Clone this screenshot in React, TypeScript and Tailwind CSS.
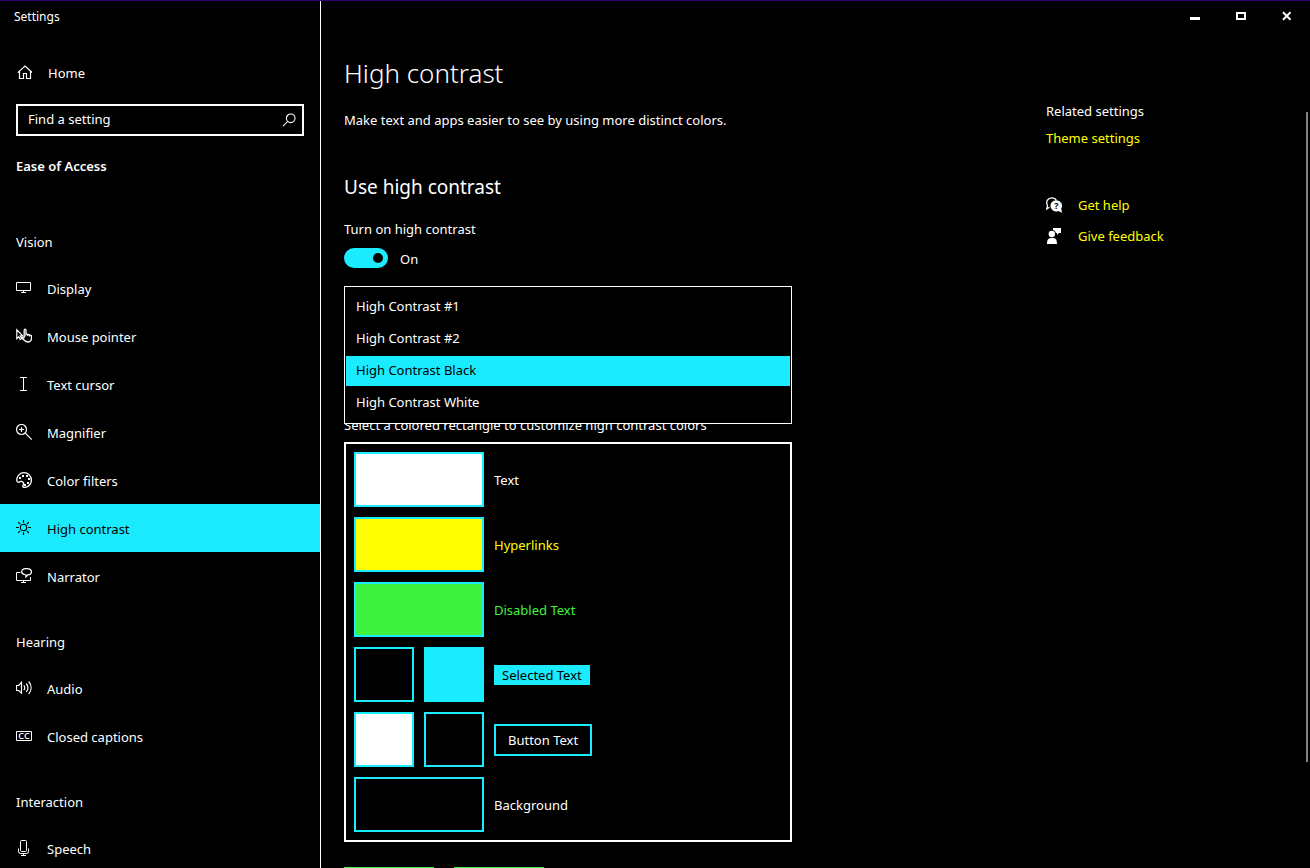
import { useState } from "react";
import type { ReactNode } from "react";

function Icon({ children }: { children: ReactNode }) {
  return (
    <svg
      className="size-4 shrink-0"
      viewBox="0 0 16 16"
      fill="none"
      stroke="currentColor"
      strokeWidth={1}
      aria-hidden="true"
    >
      {children}
    </svg>
  );
}

const icons = {
  home: (
    <Icon>
      <path strokeWidth={1.2} d="M1.800 7.6 9 1.1l7.2 6.5M3.5 6.4v7.1h4v-5h3v5h4V6.4" />
    </Icon>
  ),
  display: (
    <Icon>
      <path d="M.5 2.5h14v8H.5zM7.5 10.5v2M5 12.5h5" />
    </Icon>
  ),
  mouse: (
    <Icon>
      <path strokeWidth={1.2} d="M7 8.100.8 1.8v8.9l2-1.900 1.400 2.700 1.500-.7L4.400 7.900h2" />
      <path
        strokeWidth={1.3}
        d="M8.200 9.800V2.300c0-1.400 1.800-1.400 1.800 0V6.500c.4-.7 1.700-.6 1.800.3.500-.5 1.700-.4 1.800.5.900-.4 1.900 0 1.900 1V10c0 2.400-1.500 4-3.700 4-1.900 0-2.900-.8-3.800-2.100L5.500 9.700c.6-1 1.500-.8 2.700.4M11.800 6.800v1.200M13.600 7.300v1.200"
      />
    </Icon>
  ),
  textCursor: (
    <Icon>
      <path d="M4 1.500h7M4 14.500h7M7.500 1.500v13" />
    </Icon>
  ),
  magnifier: (
    <Icon>
      <circle cx="5.500" cy="5.500" r="5" strokeWidth={1.2} />
      <path strokeWidth={1.2} d="m9.300 9.100 6.400 6.400M5.500 3v5M3 5.500h5" />
    </Icon>
  ),
  palette: (
    <Icon>
      <path
        strokeWidth={1.3}
        d="M.7 8C.7 4 4 .7 8 .7s7.400 3.300 7.400 7.300-3.300 7.400-6.900 7.400c-1.800 0-2-1.300-1.400-2.200.9-1.400.6-2.400-.1-3C5.800 9.300 5 9 3.600 9.900 2.200 10.800.7 10 .7 8Z"
      />
      <path
        fill="currentColor"
        stroke="none"
        d="M3 5h2v2H3zM6 3h2v2H6zM10 3h2v2h-2zM12 6h2v2h-2zM11 10h2v2h-2zM8 12h2v2H8z"
      />
    </Icon>
  ),
  sun: (
    <Icon>
      <circle cx="7.500" cy="7.500" r="3.200" strokeWidth={1.100} />
      <path
        strokeWidth={1.200}
        d="M7.500 0v2.800M7.500 12.200V15M0 7.500h2.800M12.200 7.500H15M2.200 2.200l2 2M10.800 10.800l2 2M12.800 2.200l-2 2M4.200 10.800l-2 2"
      />
    </Icon>
  ),
  narrator: (
    <Icon>
      <path d="M4.500 4.500h-4v8h14V9M7.500 12.500v2M5 14.500h5" />
      <path
        strokeWidth={1.200}
        d="M8.500 6.500C4.800 5.500 4.800 1.700 8 .9c3.500-.9 7.500 0 7.500 2.800 0 2-1.900 3-3.700 3.100L9.900 9V6.800z"
      />
    </Icon>
  ),
  audio: (
    <Icon>
      <path
        strokeWidth={1.2}
        d="M5.500 2.300v10.900L2.700 10.500H.5V5.500h2.200zM7.800 5.300c1.200 1.500 1.200 3.400 0 4.900M10.200 3.500c2.100 2.500 2.100 6 0 8.500M12.700 1.500c3.200 3.800 3.200 8.700 0 12.500"
      />
    </Icon>
  ),
  captions: (
    <Icon>
      <path d="M.5 3.500h15v9H.5z" />
      <text
        x="8"
        y="11"
        textAnchor="middle"
        fontSize="9"
        fontWeight="600"
        fontFamily="Open Sans, sans-serif"
        fill="currentColor"
        stroke="none"
      >
        CC
      </text>
    </Icon>
  ),
  mic: (
    <Icon>
      <path d="M4.500 1.500q0-1 1-1h4q1 0 1 1v9q0 1-1 1h-4q-1 0-1-1zM2.500 8.500v3q0 2 2 2h6q2 0 2-2v-3M7.500 13.500v2M5 15.500h5" />
    </Icon>
  ),
  help: (
    <Icon>
      <path strokeWidth={1.300} d="M3.400 10.300.8 12l.7-3.500C-.8 4.300 2.200.8 5.700.8c2.300 0 3.800 1 4.600 2.500" />
      <path
        fill="currentColor"
        stroke="none"
        d="M10.500 3.200a5.500 5.500 0 0 1 4.700 8.300l.8 4.300-3.700-1.900A5.600 5.600 0 1 1 10.500 3.200Z"
      />
      <text
        x="10.500"
        y="11.800"
        textAnchor="middle"
        fontSize="9"
        fontWeight="700"
        fontFamily="Open Sans, sans-serif"
        fill="black"
        stroke="none"
      >
        ?
      </text>
    </Icon>
  ),
  feedback: (
    <Icon>
      <g fill="currentColor" stroke="none">
        <circle cx="5.800" cy="6" r="3.200" />
        <path d="M1 16c0-4 1-6 4.500-6h1C10 10 11 12 11 16ZM7 0h8v5h-2l-2 2V5H9.800C9.600 3.500 8.500 2.300 7 2Z" />
      </g>
    </Icon>
  ),
};

const groups = [
  {
    title: "Vision",
    items: [
      { label: "Display", icon: icons.display },
      { label: "Mouse pointer", icon: icons.mouse },
      { label: "Text cursor", icon: icons.textCursor },
      { label: "Magnifier", icon: icons.magnifier },
      { label: "Color filters", icon: icons.palette },
      { label: "High contrast", icon: icons.sun },
      { label: "Narrator", icon: icons.narrator },
    ],
  },
  {
    title: "Hearing",
    items: [
      { label: "Audio", icon: icons.audio },
      { label: "Closed captions", icon: icons.captions },
    ],
  },
  {
    title: "Interaction",
    items: [{ label: "Speech", icon: icons.mic }],
  },
];

const themes = ["High Contrast #1", "High Contrast #2", "High Contrast Black", "High Contrast White"];

const swatchRows = [
  { name: "Text", colors: ["bg-white"], sample: <span>Text</span> },
  { name: "Hyperlinks", colors: ["bg-[#ffff00]"], sample: <span className="text-[#ffff00]">Hyperlinks</span> },
  { name: "Disabled Text", colors: ["bg-[#3ff23f]"], sample: <span className="text-[#3ff23f]">Disabled Text</span> },
  {
    name: "Selected Text",
    colors: ["bg-black", "bg-[#1aebff]"],
    sample: <span className="bg-[#1aebff] px-2 text-black">Selected Text</span>,
  },
  {
    name: "Button Text",
    colors: ["bg-white", "bg-black"],
    sample: <span className="border-2 border-[#1aebff] px-3 py-1">Button Text</span>,
  },
  { name: "Background", colors: ["bg-black"], sample: <span>Background</span> },
];

function Sidebar() {
  const [page, setPage] = useState("High contrast");

  return (
    <aside className="flex w-[321px] shrink-0 flex-col overflow-hidden border-r border-white">
      <div className="flex h-8 shrink-0 items-center px-3.5 text-xs">Settings</div>

      <a href="#home" className="mt-4 flex h-12 shrink-0 items-center gap-4 px-4">
        {icons.home}
        Home
      </a>

      {/* Search */}
      <label className="mx-4 mt-[7px] flex h-8 shrink-0 items-center border-2 border-white px-2.5">
        <input
          type="text"
          aria-label="Find a setting"
          placeholder="Find a setting"
          className="min-w-0 flex-1 bg-transparent pb-0.5 outline-none placeholder:text-white"
        />
        <svg
          className="-mr-1 size-4 shrink-0"
          viewBox="0 0 16 16"
          fill="none"
          stroke="currentColor"
          strokeWidth={1.1}
          aria-hidden="true"
        >
          <circle cx="10.700" cy="6.300" r="4.300" />
          <path d="m7.500 9.600-4.500 4.500" />
        </svg>
      </label>

      <h2 className="flex h-16 shrink-0 items-center px-4 pb-1 font-semibold">Ease of Access</h2>

      <nav>
        {groups.map((group) => (
          <section key={group.title}>
            <h3 className="flex h-16 items-end px-4 pb-3">{group.title}</h3>
            {group.items.map(({ label, icon }) => (
              <button
                key={label}
                type="button"
                onClick={() => setPage(label)}
                className={`flex h-12 w-full items-center gap-[15px] px-4 text-left ${
                  page === label ? "bg-[#1aebff] text-black" : ""
                }`}
              >
                {icon}
                <span className="pt-0.5">{label}</span>
              </button>
            ))}
          </section>
        ))}
      </nav>
    </aside>
  );
}

function WindowControls() {
  return (
    <div className="flex h-8 shrink-0 justify-end">
      <button type="button" aria-label="Minimize" className="flex w-[46px] items-center justify-center">
        <svg className="h-3 w-3" viewBox="0 0 12 12" fill="currentColor">
          <path d="M1 6h10v3H1z" />
        </svg>
      </button>
      <button type="button" aria-label="Maximize" className="flex w-[46px] items-center justify-center">
        <svg className="h-3 w-3" viewBox="0 0 12 12" fill="none" stroke="currentColor" strokeWidth={2}>
          <path d="M2 2h8v6H2z" />
        </svg>
      </button>
      <button type="button" aria-label="Close" className="flex w-[46px] items-center justify-center">
        <svg className="h-3 w-3" viewBox="0 0 12 12" fill="none" stroke="currentColor" strokeWidth={2}>
          <path d="m2 1.300 7.500 7.500M9.500 1.300 2 8.800" />
        </svg>
      </button>
    </div>
  );
}

export default function App() {
  const [enabled, setEnabled] = useState(true);
  const [theme, setTheme] = useState("High Contrast Black");

  return (
    <div className="relative flex h-screen overflow-hidden border-t border-[#32006e] bg-black font-['Noto_Sans',sans-serif] text-[13px] leading-5 text-white">
      <Sidebar />

      <div className="flex min-w-0 flex-1 flex-col">
        <WindowControls />

        <div className="flex min-h-0 flex-1 overflow-hidden pl-[23px]">
          <main className="min-w-0 flex-1">
            <div className="max-w-[448px]">
              <h1 className="mt-5 text-[26px] leading-10 font-light">High contrast</h1>
              <p className="mt-[17px] whitespace-nowrap">
                Make text and apps easier to see by using more distinct colors.
              </p>

              <h2 className="mt-[43px] text-[19px] leading-7">Use high contrast</h2>
              <label htmlFor="contrast" className="mt-[18px] block">
                Turn on high contrast
              </label>
              <div className="mt-[9px] flex h-5 items-center gap-3">
                <input
                  id="contrast"
                  type="checkbox"
                  role="switch"
                  checked={enabled}
                  onChange={(e) => setEnabled(e.target.checked)}
                  className="flex h-5 w-11 appearance-none items-center rounded-full bg-[#1aebff] px-[5px] before:size-2.5 before:rounded-full before:bg-black checked:justify-end"
                />
                <span className="pt-0.5">{enabled ? "On" : "Off"}</span>
              </div>

              {/* Theme picker, with its list open over the text below */}
              <div className="relative mt-[18px]">
                <select
                  aria-label="Choose a theme"
                  value={theme}
                  onChange={(e) => setTheme(e.target.value)}
                  className="h-8 w-full border-2 border-white bg-black px-2.5"
                >
                  {themes.map((name) => (
                    <option key={name}>{name}</option>
                  ))}
                </select>
                <ul
                  role="listbox"
                  aria-label="Themes"
                  className="absolute inset-x-0 top-0 z-10 flex flex-col gap-0.5 border border-white bg-black px-px py-[5px]"
                >
                  {themes.map((name) => (
                    <li
                      key={name}
                      role="option"
                      aria-selected={name === theme}
                      onClick={() => setTheme(name)}
                      className={`px-2.5 pt-1 pb-1.5 ${name === theme ? "bg-[#1aebff] text-black" : ""}`}
                    >
                      {name}
                    </li>
                  ))}
                </ul>
              </div>

              <p className="mt-[97px]">Select a colored rectangle to customize high contrast colors</p>

              <div className="mt-[7px] flex flex-col gap-2.5 border-2 border-white p-2">
                {swatchRows.map(({ name, colors, sample }) => (
                  <div key={name} className="flex h-[55px] items-center gap-2.5">
                    <div className="flex h-full w-[130px] gap-2.5">
                      {colors.map((color) => (
                        <button
                          key={color}
                          type="button"
                          aria-label={name}
                          className={`flex-1 border-2 border-[#1aebff] ${color}`}
                        />
                      ))}
                    </div>
                    {sample}
                  </div>
                ))}
              </div>

              <div className="mt-[25px] flex gap-5">
                <button
                  type="button"
                  disabled
                  aria-label="Apply"
                  className="h-8 w-[90px] border-2 border-[#3ff23f]"
                />
                <button
                  type="button"
                  disabled
                  aria-label="Cancel"
                  className="h-8 w-[90px] border-2 border-[#3ff23f]"
                />
              </div>
            </div>
          </main>

          {/* Related links */}
          <aside className="w-[264px] shrink-0 pt-[68px]">
            <h2>Related settings</h2>
            <a href="#theme" className="mt-[7px] block text-[#ffff00]">
              Theme settings
            </a>
            <div className="mt-[47px] flex flex-col gap-[11px]">
              <a href="#help" className="flex items-center gap-4">
                {icons.help}
                <span className="text-[#ffff00]">Get help</span>
              </a>
              <a href="#feedback" className="flex items-center gap-4">
                {icons.feedback}
                <span className="text-[#ffff00]">Give feedback</span>
              </a>
            </div>
          </aside>
        </div>
      </div>

      {/* Scroll thumb */}
      <div className="absolute top-[111px] right-0.5 h-3/4 w-0.5 bg-[#858585]" />
    </div>
  );
}
